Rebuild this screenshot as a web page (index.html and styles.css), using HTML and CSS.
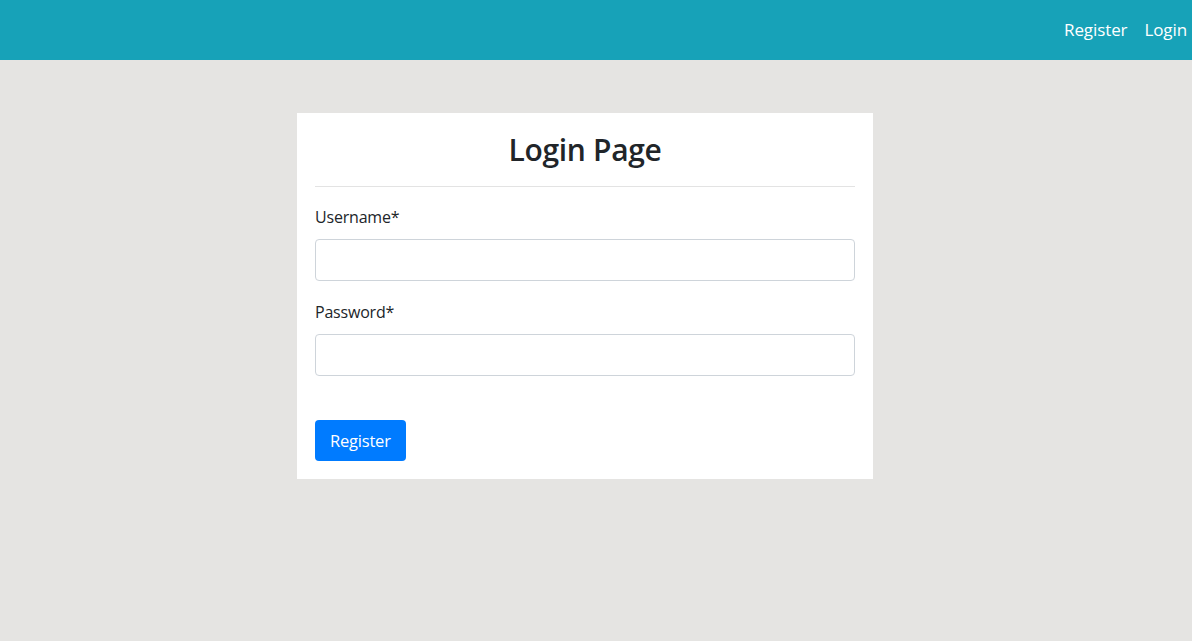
FILE: index.html
```html
<!DOCTYPE html>
<html lang="en">
<head>
<meta charset="utf-8">
<title>Login Page</title>
<link rel="stylesheet" href="styles.css">
</head>
<body>
<nav class="navbar">
  <a class="nav-link" href="#">Register</a>
  <a class="nav-link" href="#">Login</a>
</nav>
<main class="main">
  <section class="card">
    <h2 class="card-title">Login Page</h2>
    <hr class="divider">
    <form class="form">
      <div class="field">
        <label class="label" for="username">Username*</label>
        <input class="input" id="username" type="text">
      </div>
      <div class="field">
        <label class="label" for="password">Password*</label>
        <input class="input" id="password" type="password">
      </div>
      <button class="btn" type="button">Register</button>
    </form>
  </section>
</main>
</body>
</html>
```

FILE: styles.css
```css
* { box-sizing: border-box; }
html, body {
  margin: 0;
  padding: 0;
}
body {
  background: #e5e4e2;
  font-family: "Open Sans", "Noto Sans", sans-serif;
  color: #212529;
  min-height: 641px;
}
.navbar {
  height: 60px;
  background: #17a2b8;
  display: flex;
  justify-content: flex-end;
  align-items: center;
  gap: 17px;
  padding: 0 5px 2px 0;
}
.nav-link {
  color: #fff;
  text-decoration: none;
  font-size: 17px;
  letter-spacing: -0.1px;
}
.main {
  padding: 53px 0 0 297px;
}
.card {
  width: 576px;
  background: #fff;
  padding: 18px 18px 18px 18px;
}
.card-title {
  margin: 0;
  text-align: center;
  font-size: 30px;
  font-weight: 600;
  line-height: 38px;
  letter-spacing: -0.3px;
}
.divider {
  border: 0;
  border-top: 1px solid #e3e3e3;
  margin: 17px 0 18px;
}
.field {
  margin-bottom: 19px;
}
.label {
  display: block;
  font-size: 16px;
  line-height: 24px;
  margin-bottom: 10px;
  letter-spacing: -0.2px;
}
.input {
  display: block;
  width: 100%;
  height: 42px;
  border: 1px solid #ced4da;
  border-radius: 4px;
  background: #fff;
}
.btn {
  margin-top: 25px;
  background: #007bff;
  color: #fff;
  border: 0;
  border-radius: 4px;
  height: 41px;
  padding: 0 15px;
  font-family: inherit;
  font-size: 16.5px;
  letter-spacing: -0.2px;
}
```
